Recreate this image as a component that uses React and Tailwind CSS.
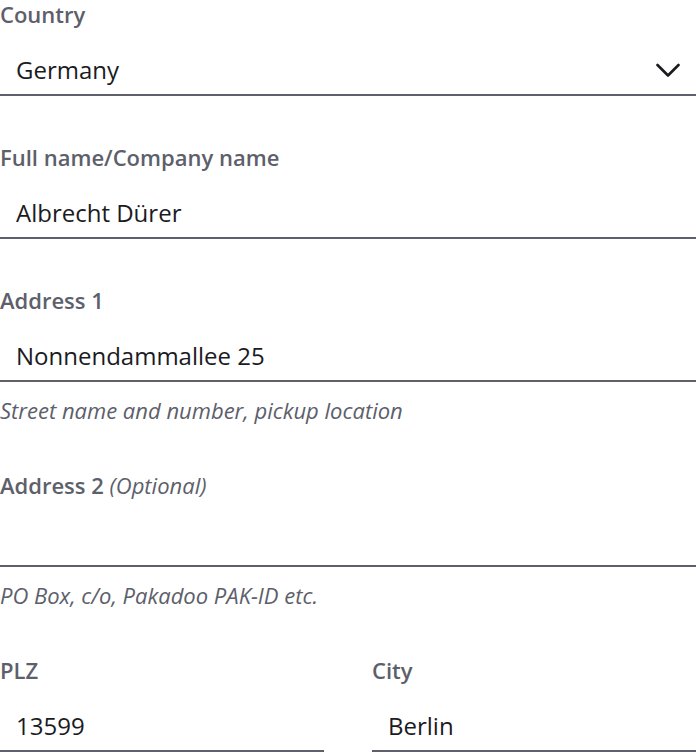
import React from "react";

function Chevron() {
  return (
    <svg width="24" height="15" viewBox="0 0 24 15" fill="none" className="text-[#1b1b1f]">
      <path d="M1.5 2l10.5 10.5L22.5 2" stroke="currentColor" strokeWidth="2.6" strokeLinecap="round" strokeLinejoin="round" />
    </svg>
  );
}

function Field({ label, optional, value, helper, select, className = "" }) {
  return (
    <div className={className}>
      <label className="block h-7 text-[22px] leading-7 font-semibold text-[#5d606b]">
        {label}
        {optional && <span className="font-normal italic"> (Optional)</span>}
      </label>
      <div className="mt-[18px] flex h-[50px] items-center justify-between border-b-2 border-[#5d606b] pl-4 pr-4">
        <span className="text-[24px] text-[#1b1b1f]">{value}</span>
        {select && <Chevron />}
      </div>
      {helper && (
        <p className="mt-[14px] text-[22px] leading-7 italic text-[#5d606b]">{helper}</p>
      )}
    </div>
  );
}

export default function App() {
  return (
    <div
      className="w-[696px] bg-white"
      style={{ fontFamily: '"Open Sans", sans-serif' }}
    >
      <Field label="Country" value="Germany" select />
      <Field className="mt-[47px]" label="Full name/Company name" value="Albrecht Dürer" />
      <Field
        className="mt-[47px]"
        label="Address 1"
        value="Nonnendammallee 25"
        helper="Street name and number, pickup location"
      />
      <Field
        className="mt-[47px]"
        label="Address 2"
        optional
        value=""
        helper="PO Box, c/o, Pakadoo PAK-ID etc."
      />
      <div className="mt-[47px] grid grid-cols-2 gap-12">
        <Field label="PLZ" value="13599" />
        <Field label="City" value="Berlin" />
      </div>
    </div>
  );
}
